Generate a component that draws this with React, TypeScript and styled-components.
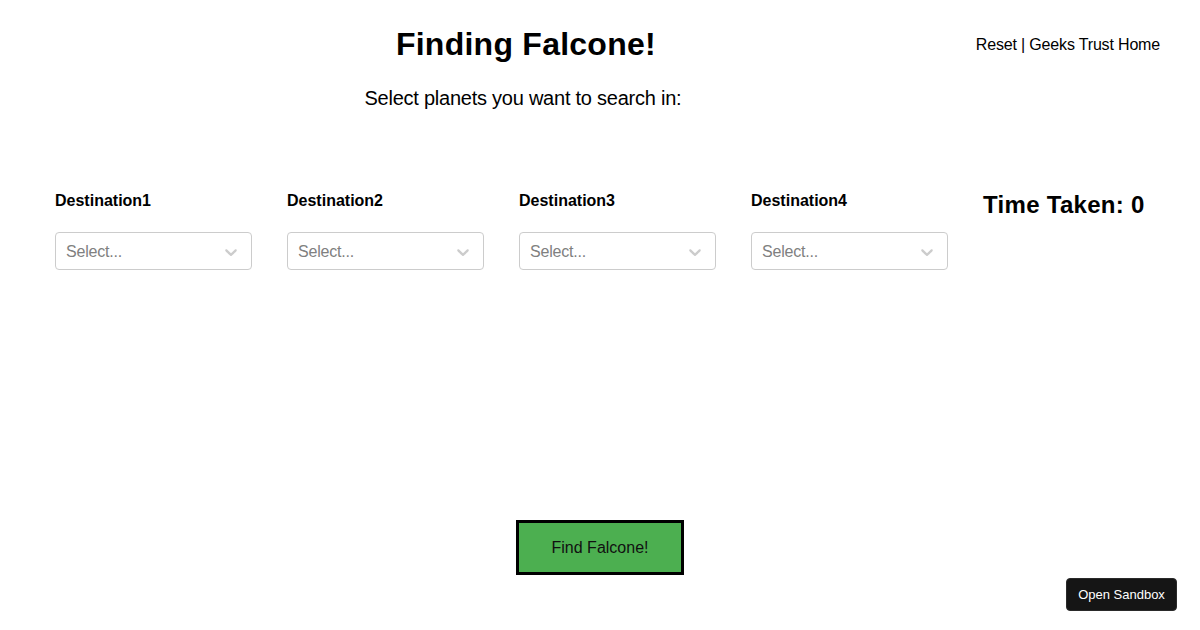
import React from "react";
import styled, { createGlobalStyle } from "styled-components";

const Global = createGlobalStyle`
  html, body { margin: 0; padding: 0; background: #fff; }
  body { font-family: "Liberation Sans", Arial, sans-serif; color: #000; }
  * { box-sizing: border-box; }
`;

const Page = styled.div`
  width: 1200px;
  height: 630px;
  display: flex;
  flex-direction: column;
  position: relative;
`;

const Header = styled.header`
  display: flex;
  align-items: flex-start;
  padding: 0 40px 0 0;
`;

const TitleBlock = styled.div`
  flex: 1;
  padding-left: 76px;
  text-align: center;
`;

const Title = styled.h1`
  margin: 24px 0 0;
  font-size: 32px;
  font-weight: bold;
  line-height: 40px;
  letter-spacing: 0.25px;
`;

const Subtitle = styled.p`
  margin: 22px 0 0;
  padding-right: 6px;
  font-size: 20px;
  line-height: 24px;
  letter-spacing: -0.24px;
`;

const Links = styled.div`
  margin-top: 36px;
  font-size: 16px;
  line-height: 18px;
  white-space: nowrap;
  letter-spacing: -0.17px;
`;

const LinkText = styled.span`
  color: #000;
  cursor: pointer;
`;

const Row = styled.div`
  display: flex;
  gap: 35px;
  padding-left: 55px;
  margin-top: 82px;
`;

const Column = styled.div`
  width: 197px;
  display: flex;
  flex-direction: column;
`;

const Label = styled.div`
  font-size: 16px;
  font-weight: bold;
  line-height: 18px;
`;

const SelectBox = styled.div`
  margin-top: 22px;
  height: 38px;
  border: 1px solid #cccccc;
  border-radius: 4px;
  display: flex;
  align-items: center;
  padding: 1px 10px 0;
  justify-content: space-between;
  background: #fff;
`;

const Placeholder = styled.span`
  color: #808080;
  font-size: 16px;
  letter-spacing: -0.2px;
`;

const TimeTaken = styled.div`
  font-size: 24px;
  font-weight: bold;
  line-height: 28px;
  margin-top: -1px;
  letter-spacing: 0.3px;
`;

const ButtonRow = styled.div`
  display: flex;
  justify-content: center;
  margin-top: 250px;
`;

const FindButton = styled.button`
  width: 168px;
  height: 55px;
  background: #4caf50;
  border: 3px solid #000;
  font-family: "Liberation Sans", Arial, sans-serif;
  font-size: 16px;
  color: #111;
  cursor: pointer;
`;

const Sandbox = styled.button`
  position: absolute;
  right: 23px;
  bottom: 19px;
  width: 111px;
  height: 33px;
  background: #151515;
  color: #fff;
  border: 1px solid #2a2a2a;
  border-radius: 4px;
  font-family: "Liberation Sans", Arial, sans-serif;
  font-size: 13px;
`;

const Chevron = () => (
  <svg width="20" height="20" viewBox="0 0 20 20" fill="#cccccc">
    <path d="M4.516 7.548c0.436-0.446 1.043-0.481 1.576 0l3.908 3.747 3.908-3.747c0.533-0.481 1.141-0.446 1.574 0 0.436 0.445 0.408 1.197 0 1.615-0.406 0.418-4.695 4.502-4.695 4.502-0.217 0.223-0.502 0.335-0.787 0.335s-0.57-0.112-0.789-0.335c0 0-4.287-4.084-4.695-4.502s-0.436-1.17 0-1.615z" />
  </svg>
);

export default function App() {
  const dests = ["Destination1", "Destination2", "Destination3", "Destination4"];
  return (
    <Page>
      <Global />
      <Header>
        <TitleBlock>
          <Title>Finding Falcone!</Title>
          <Subtitle>Select planets you want to search in:</Subtitle>
        </TitleBlock>
        <Links>
          <LinkText>Reset</LinkText> | <LinkText>Geeks Trust Home</LinkText>
        </Links>
      </Header>
      <Row>
        {dests.map((d) => (
          <Column key={d}>
            <Label>{d}</Label>
            <SelectBox>
              <Placeholder>Select...</Placeholder>
              <Chevron />
            </SelectBox>
          </Column>
        ))}
        <TimeTaken>Time Taken: 0</TimeTaken>
      </Row>
      <ButtonRow>
        <FindButton>Find Falcone!</FindButton>
      </ButtonRow>
      <Sandbox>Open Sandbox</Sandbox>
    </Page>
  );
}
